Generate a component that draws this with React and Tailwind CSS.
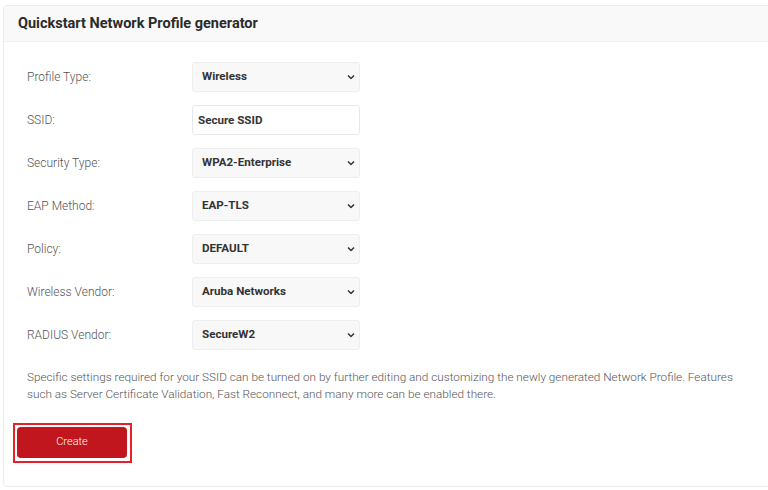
const fields = [
  { label: 'Profile Type:', value: 'Wireless', type: 'select' },
  { label: 'SSID:', value: 'Secure SSID', type: 'input' },
  { label: 'Security Type:', value: 'WPA2-Enterprise', type: 'select' },
  { label: 'EAP Method:', value: 'EAP-TLS', type: 'select' },
  { label: 'Policy:', value: 'DEFAULT', type: 'select' },
  { label: 'Wireless Vendor:', value: 'Aruba Networks', type: 'select' },
  { label: 'RADIUS Vendor:', value: 'SecureW2', type: 'select' },
];

const Chevron = () => (
  <svg width="8" height="5" viewBox="0 0 8 5" className="pointer-events-none absolute right-[5px] top-1/2 -translate-y-1/2">
    <path d="M1 1l3 3 3-3" fill="none" stroke="#333" strokeWidth="1.5" />
  </svg>
);

const Field = ({ field }) => (
  <div className="flex items-center h-[30px]">
    <label className="w-[165px] text-[12px] font-light text-[#555]">{field.label}</label>
    {field.type === 'select' ? (
      <div className="relative w-[168px] h-[30px]">
        <select
          defaultValue={field.value}
          className="appearance-none w-full h-full pl-[9px] pr-6 bg-[#f8f8f8] border border-[#eeeeee] rounded-[3px] text-[11.6px] font-bold text-[#333] outline-none"
        >
          <option>{field.value}</option>
        </select>
        <Chevron />
      </div>
    ) : (
      <input
        defaultValue={field.value}
        className="w-[168px] h-[30px] px-[5px] bg-white border border-[#e8e8e8] rounded-[3px] text-[11.6px] font-bold text-[#333] outline-none"
      />
    )}
  </div>
);

export default function App() {
  return (
    <div className="w-[768px] h-[490px] overflow-hidden bg-white pl-[3px] pt-[5px]" style={{ fontFamily: 'Roboto, "Liberation Sans", sans-serif' }}>
      <div className="w-[780px] border border-[#ececec] rounded-[4px] bg-white">
        {/* Header */}
        <div className="h-[36px] flex items-center px-[14px] bg-[#f9f9f9] border-b border-[#f0f0f0] rounded-t-[4px]">
          <h3 className="text-[14.5px] font-bold text-[#2b2b2b]">Quickstart Network Profile generator</h3>
        </div>

        {/* Body */}
        <div className="pt-[20px] pb-[23px]">
          <div className="pl-[23px] flex flex-col gap-[13px]">
            {fields.map((f) => (
              <Field key={f.label} field={f} />
            ))}
          </div>

          <p className="pl-[23px] w-[750px] mt-[19px] text-[11.75px] font-light leading-[17px] text-[#555]">
            Specific settings required for your SSID can be turned on by further editing and customizing the newly generated Network Profile. Features such as Server Certificate Validation, Fast Reconnect, and many more can be enabled there.
          </p>

          <div className="pl-[9px] mt-[20px]">
            <div className="inline-block border-2 border-[#e8202a] pt-[2px] pl-[2px] pr-[3px] pb-[3px]">
              <button className="w-[110px] h-[31px] rounded-[4px] bg-[#c1161e] text-white text-[11px] font-light">
                Create
              </button>
            </div>
          </div>
        </div>
      </div>
    </div>
  );
}
